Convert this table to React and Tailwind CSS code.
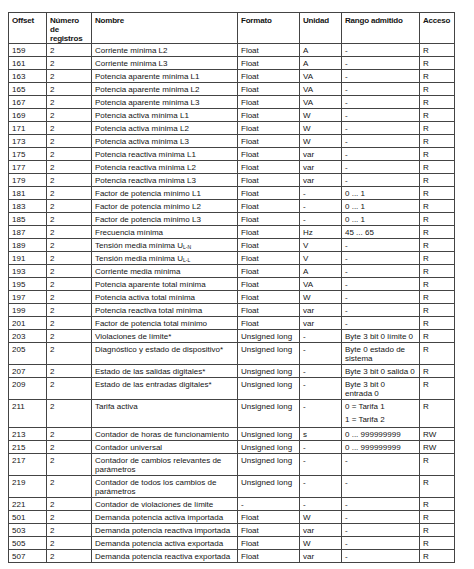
import React from "react";

const rows = [
  ["159", "2", "Corriente mínima L2", "Float", "A", "-", "R"],
  ["161", "2", "Corriente mínima L3", "Float", "A", "-", "R"],
  ["163", "2", "Potencia aparente mínima L1", "Float", "VA", "-", "R"],
  ["165", "2", "Potencia aparente mínima L2", "Float", "VA", "-", "R"],
  ["167", "2", "Potencia aparente mínima L3", "Float", "VA", "-", "R"],
  ["169", "2", "Potencia activa mínima L1", "Float", "W", "-", "R"],
  ["171", "2", "Potencia activa mínima L2", "Float", "W", "-", "R"],
  ["173", "2", "Potencia activa mínima L3", "Float", "W", "-", "R"],
  ["175", "2", "Potencia reactiva mínima L1", "Float", "var", "-", "R"],
  ["177", "2", "Potencia reactiva mínima L2", "Float", "var", "-", "R"],
  ["179", "2", "Potencia reactiva mínima L3", "Float", "var", "-", "R"],
  ["181", "2", "Factor de potencia mínimo L1", "Float", "-", "0 ... 1", "R"],
  ["183", "2", "Factor de potencia mínimo L2", "Float", "-", "0 ... 1", "R"],
  ["185", "2", "Factor de potencia mínimo L3", "Float", "-", "0 ... 1", "R"],
  ["187", "2", "Frecuencia mínima", "Float", "Hz", "45 ... 65", "R"],
  ["189", "2", <>Tensión media mínima U<sub className="text-[5px]">L-N</sub></>, "Float", "V", "-", "R"],
  ["191", "2", <>Tensión media mínima U<sub className="text-[5px]">L-L</sub></>, "Float", "V", "-", "R"],
  ["193", "2", "Corriente media mínima", "Float", "A", "-", "R"],
  ["195", "2", "Potencia aparente total mínima", "Float", "VA", "-", "R"],
  ["197", "2", "Potencia activa total mínima", "Float", "W", "-", "R"],
  ["199", "2", "Potencia reactiva total mínima", "Float", "var", "-", "R"],
  ["201", "2", "Factor de potencia total mínimo", "Float", "var", "-", "R"],
  ["203", "2", "Violaciones de límite*", "Unsigned long", "-", "Byte 3 bit 0 límite 0", "R"],
  ["205", "2", "Diagnóstico y estado de dispositivo*", "Unsigned long", "-", <>Byte 0 estado de<br />sistema</>, "R"],
  ["207", "2", "Estado de las salidas digitales*", "Unsigned long", "-", "Byte 3 bit 0 salida 0", "R"],
  ["209", "2", "Estado de las entradas digitales*", "Unsigned long", "-", <>Byte 3 bit 0<br />entrada 0</>, "R"],
  ["211", "2", "Tarifa activa", "Unsigned long", "-", <><div>0 = Tarifa 1</div><div className="mt-[4px] pb-[2px]">1 = Tarifa 2</div></>, "R"],
  ["213", "2", "Contador de horas de funcionamiento", "Unsigned long", "s", "0 ... 999999999", "RW"],
  ["215", "2", "Contador universal", "Unsigned long", "-", "0 ... 999999999", "RW"],
  ["217", "2", <>Contador de cambios relevantes de<br />parámetros</>, "Unsigned long", "-", "-", "R"],
  ["219", "2", <>Contador de todos los cambios de<br />parámetros</>, "Unsigned long", "-", "-", "R"],
  ["221", "2", "Contador de violaciones de límite", "-", "-", "-", "R"],
  ["501", "2", "Demanda potencia activa importada", "Float", "W", "-", "R"],
  ["503", "2", "Demanda potencia reactiva importada", "Float", "var", "-", "R"],
  ["505", "2", "Demanda potencia activa exportada", "Float", "W", "-", "R"],
  ["507", "2", "Demanda potencia reactiva exportada", "Float", "var", "-", "R"],
];

const headers = [
  "Offset",
  <>Número<br />de<br />registros</>,
  "Nombre",
  "Formato",
  "Unidad",
  "Rango admitido",
  "Acceso",
];

const widths = ["w-[38px]", "w-[45px]", "w-[146px]", "w-[62px]", "w-[42px]", "w-[78px]", "w-[35px]"];

export default function App() {
  return (
    <div
      className="w-[474px] h-[569px] bg-white pt-[12px] pl-[8px] text-[#141414]"
      style={{ fontFamily: '"Liberation Sans", Arial, sans-serif' }}
    >
      <table className="table-fixed border-collapse w-[446px] text-[8px] leading-[9px]">
        <colgroup>
          {widths.map((w, i) => (
            <col key={i} className={w} />
          ))}
        </colgroup>
        <thead>
          <tr>
            {headers.map((h, i) => (
              <th
                key={i}
                className="border border-[#444] text-left align-top font-bold pl-[3px] pr-0 pt-[3px] pb-0 h-[31px] tracking-[-0.2px]"
              >
                {h}
              </th>
            ))}
          </tr>
        </thead>
        <tbody>
          {rows.map((r, ri) => (
            <tr key={ri}>
              {r.map((c, ci) => (
                <td
                  key={ci}
                  className="border border-[#444] align-top whitespace-nowrap pl-[3px] pr-0 pt-[2px] pb-[1px]"
                >
                  {c}
                </td>
              ))}
            </tr>
          ))}
        </tbody>
      </table>
    </div>
  );
}
